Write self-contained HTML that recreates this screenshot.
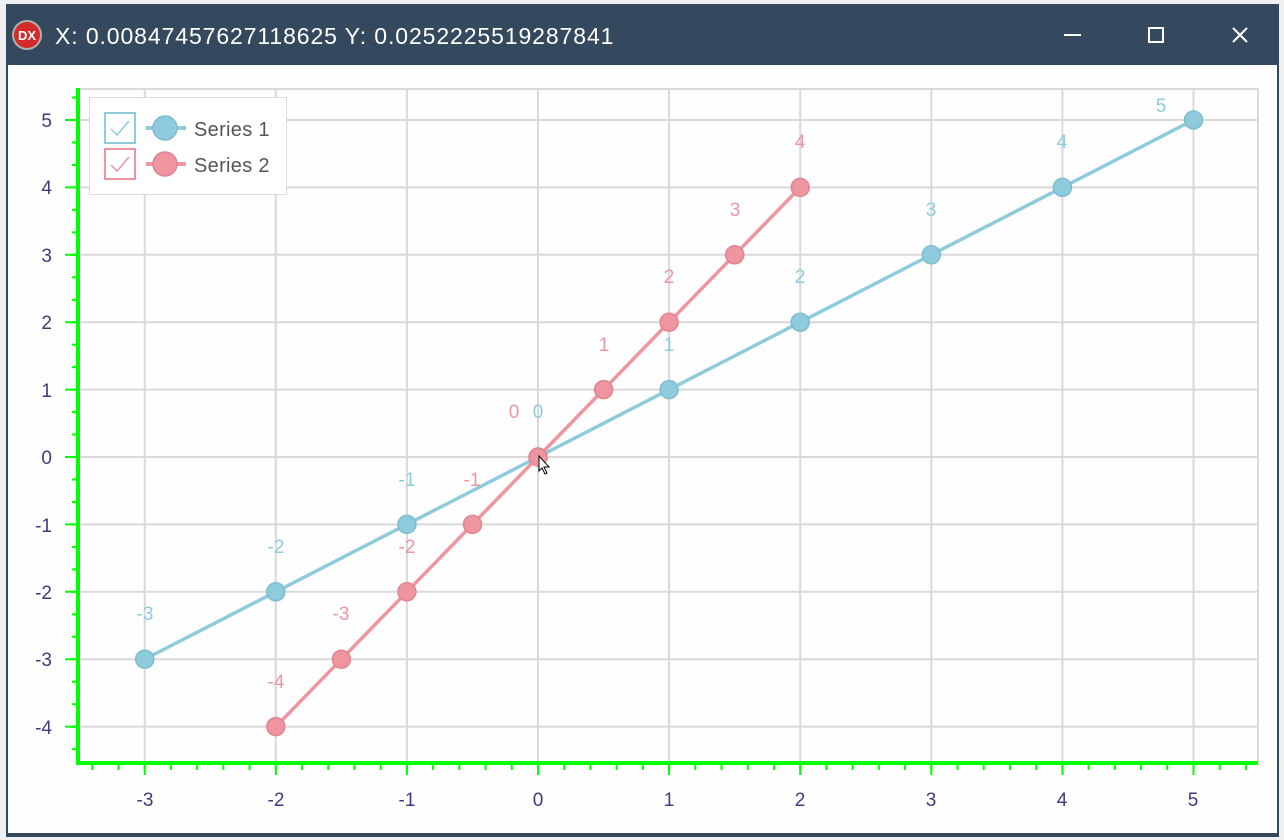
<!DOCTYPE html>
<html><head><meta charset="utf-8"><style>
html,body{margin:0;padding:0;background:#f0f0f0;width:1284px;height:840px;overflow:hidden}
svg{display:block}
</style></head><body>
<svg width="1284" height="840" viewBox="0 0 1284 840" font-family="Liberation Sans, DejaVu Sans, sans-serif">
<defs>
<pattern id="px" patternUnits="userSpaceOnUse" x="143.7" y="0" width="26.22" height="20"><rect x="0" y="0" width="2" height="20" fill="#00ff00"/></pattern>
<pattern id="py" patternUnits="userSpaceOnUse" x="0" y="119" width="20" height="22.47"><rect x="0" y="0" width="20" height="2" fill="#00ff00"/></pattern>
</defs>
<rect x="6" y="4" width="1273" height="833" fill="#34495e"/>
<rect x="8" y="65" width="1269" height="768" fill="#fefefe"/>
<!-- title -->
<circle cx="27" cy="35" r="15" fill="#b0b0b0"/>
<circle cx="27" cy="35" r="13" fill="#d42a2a"/>
<text x="27" y="40" font-size="13" font-weight="bold" fill="#fff" text-anchor="middle">DX</text>
<text x="55" y="44" font-size="23" letter-spacing="0.9" fill="#fff">X: 0.00847457627118625 Y: 0.0252225519287841</text>
<rect x="1064" y="34" width="17" height="2" fill="#fff"/>
<rect x="1149" y="28" width="14" height="14" fill="none" stroke="#fff" stroke-width="2"/>
<path d="M1233 28 L1247 42 M1247 28 L1233 42" stroke="#fff" stroke-width="2"/>
<!-- grid -->
<g stroke="#d9d9d9" stroke-width="2" fill="none">
<path d="M78 89H1258V762"/>
<path d="M144.7 89V762M275.8 89V762M406.9 89V762M538 89V762M669.1 89V762M800.2 89V762M931.3 89V762M1062.4 89V762M1193.5 89V762"/>
<path d="M78 120H1258M78 187.4H1258M78 254.8H1258M78 322.2H1258M78 389.6H1258M78 457H1258M78 524.4H1258M78 591.8H1258M78 659.2H1258M78 726.6H1258"/>
</g>
<!-- axes -->
<rect x="72" y="88" width="5" height="674" fill="url(#py)"/>
<rect x="78" y="765" width="1180" height="5" fill="url(#px)"/>
<rect x="76" y="88" width="4" height="677" fill="#00ff00"/>
<rect x="76" y="761" width="1182" height="4" fill="#00ff00"/>
<g stroke="#00ff00" stroke-width="2">
<path d="M65 120H78M65 187.4H78M65 254.8H78M65 322.2H78M65 389.6H78M65 457H78M65 524.4H78M65 591.8H78M65 659.2H78M65 726.6H78"/>
<path d="M144.7 762V775M275.8 762V775M406.9 762V775M538 762V775M669.1 762V775M800.2 762V775M931.3 762V775M1062.4 762V775M1193.5 762V775"/>
</g>
<g font-size="19" fill="#3c3c7c" text-anchor="end">
<text x="52" y="127">5</text><text x="52" y="194">4</text><text x="52" y="262">3</text><text x="52" y="329">2</text><text x="52" y="397">1</text><text x="52" y="464">0</text><text x="52" y="532">-1</text><text x="52" y="599">-2</text><text x="52" y="666">-3</text><text x="52" y="734">-4</text>
</g>
<g font-size="19" fill="#3c3c7c" text-anchor="middle">
<text x="145" y="806">-3</text><text x="276" y="806">-2</text><text x="407" y="806">-1</text><text x="538" y="806">0</text><text x="669" y="806">1</text><text x="800" y="806">2</text><text x="931" y="806">3</text><text x="1062" y="806">4</text><text x="1193" y="806">5</text>
</g>
<!-- series 1 -->
<polyline points="144.7,659.2 275.8,591.8 406.9,524.4 538,457 669.1,389.6 800.2,322.2 931.3,254.8 1062.4,187.4 1193.5,120" fill="none" stroke="#8ecbdc" stroke-width="3.5"/>
<g fill="#8ecbdc" stroke="#7fbccd" stroke-width="1.5">
<circle cx="144.7" cy="659.2" r="9"/><circle cx="275.8" cy="591.8" r="9"/><circle cx="406.9" cy="524.4" r="9"/><circle cx="669.1" cy="389.6" r="9"/><circle cx="800.2" cy="322.2" r="9"/><circle cx="931.3" cy="254.8" r="9"/><circle cx="1062.4" cy="187.4" r="9"/><circle cx="1193.5" cy="120" r="9"/>
</g>
<g font-size="19" fill="#8ecbdc" text-anchor="middle">
<text x="145" y="620">-3</text><text x="276" y="553">-2</text><text x="407" y="486">-1</text><text x="538" y="418">0</text><text x="669" y="351">1</text><text x="800" y="283">2</text><text x="931" y="216">3</text><text x="1062" y="148">4</text><text x="1161" y="112">5</text>
</g>
<!-- series 2 -->
<polyline points="275.8,726.6 341.4,659.2 406.9,591.8 472.5,524.4 538,457 603.6,389.6 669.1,322.2 734.7,254.8 800.2,187.4" fill="none" stroke="#ee959f" stroke-width="3.5"/>
<g fill="#ee959f" stroke="#de8590" stroke-width="1.5">
<circle cx="275.8" cy="726.6" r="9"/><circle cx="341.4" cy="659.2" r="9"/><circle cx="406.9" cy="591.8" r="9"/><circle cx="472.5" cy="524.4" r="9"/><circle cx="538" cy="457" r="9"/><circle cx="603.6" cy="389.6" r="9"/><circle cx="669.1" cy="322.2" r="9"/><circle cx="734.7" cy="254.8" r="9"/><circle cx="800.2" cy="187.4" r="9"/>
</g>
<g font-size="19" fill="#ee959f" text-anchor="middle">
<text x="276" y="688">-4</text><text x="341" y="620">-3</text><text x="407" y="553">-2</text><text x="472" y="486">-1</text><text x="514" y="418">0</text><text x="604" y="351">1</text><text x="669" y="283">2</text><text x="735" y="216">3</text><text x="800" y="148">4</text>
</g>
<!-- cursor -->
<path d="M539 456 L539 471 L542 468 L545 474 L547 473 L544 467 L549 467 Z" fill="#fff" stroke="#000" stroke-width="1"/>
<!-- legend -->
<rect x="89.5" y="97.5" width="197" height="97" fill="#fff" stroke="#dcdcdc" stroke-width="1"/>
<rect x="105" y="113" width="30" height="30" fill="#fff" stroke="#8ecbdc" stroke-width="2"/>
<path d="M111 129 L117 135 L129 121" fill="none" stroke="#8ecbdc" stroke-width="1.5"/>
<rect x="105" y="149" width="30" height="30" fill="#fff" stroke="#ee959f" stroke-width="2"/>
<path d="M111 165 L117 171 L129 157" fill="none" stroke="#ee959f" stroke-width="1.5"/>
<line x1="146" y1="128" x2="186" y2="128" stroke="#8ecbdc" stroke-width="4"/>
<circle cx="165" cy="128" r="12" fill="#8ecbdc" stroke="#7fbccd" stroke-width="1.5"/>
<line x1="146" y1="164" x2="186" y2="164" stroke="#ee959f" stroke-width="4"/>
<circle cx="165" cy="164" r="12" fill="#ee959f" stroke="#de8590" stroke-width="1.5"/>
<text x="194" y="136" font-size="20" letter-spacing="0.3" fill="#555">Series 1</text>
<text x="194" y="172" font-size="20" letter-spacing="0.3" fill="#555">Series 2</text>
</svg>
</body></html>
